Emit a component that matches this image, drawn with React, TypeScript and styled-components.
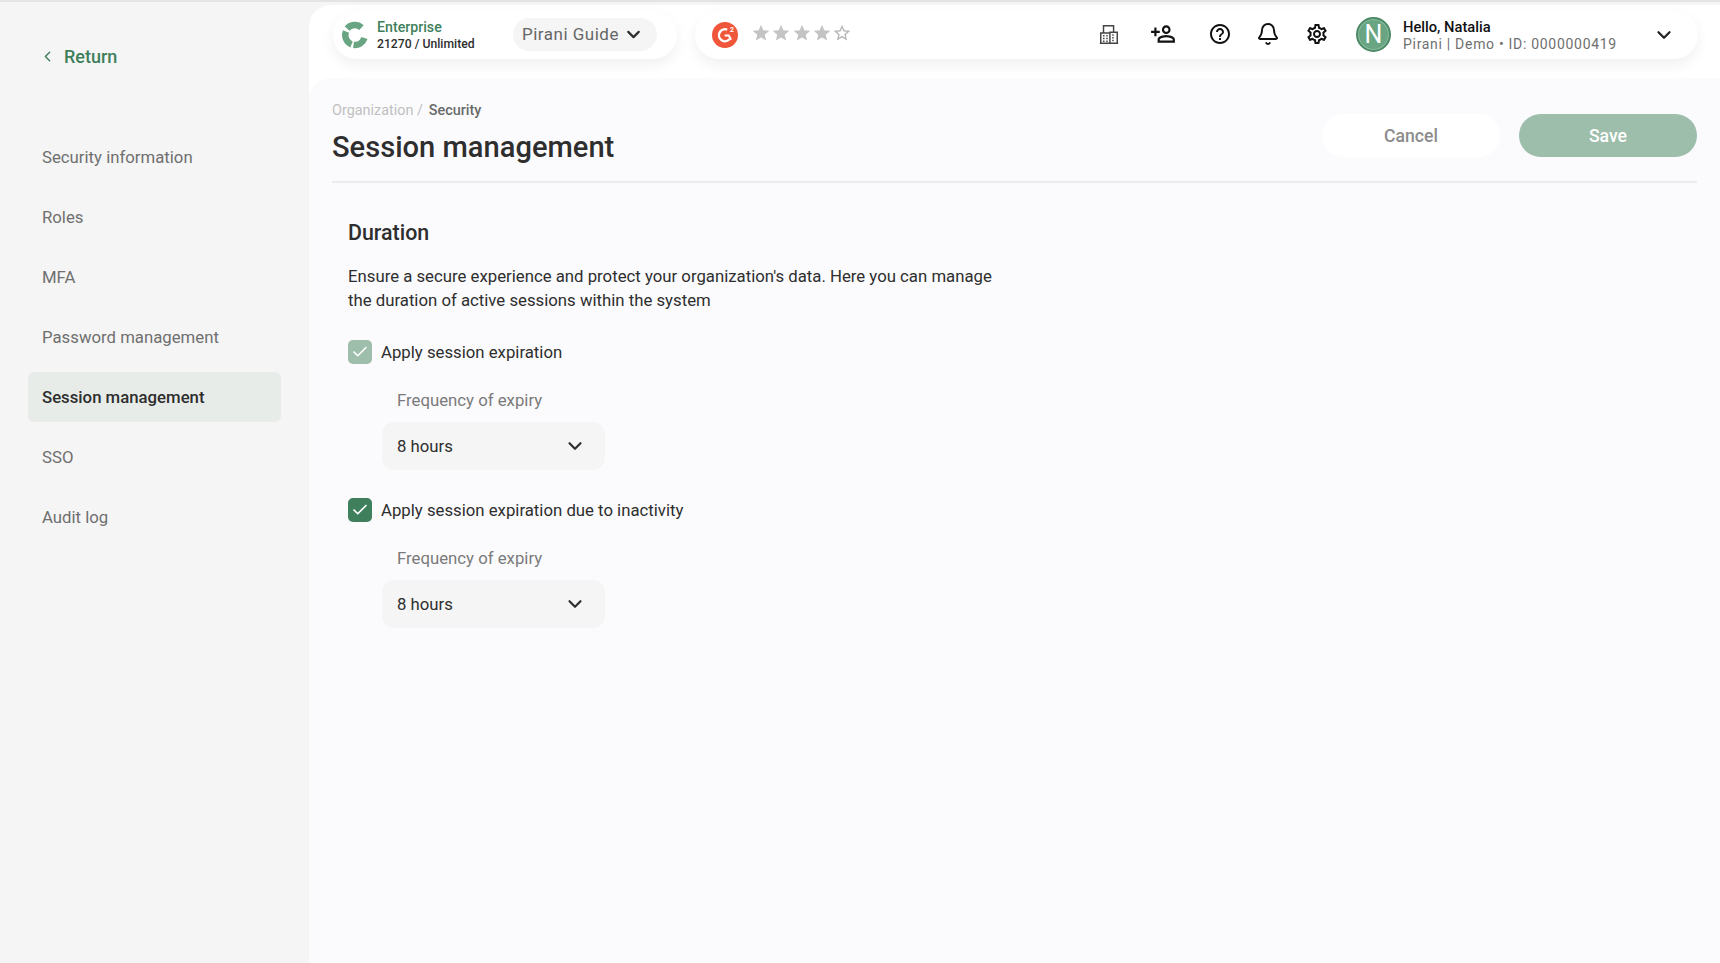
import React from 'react';
import styled, { createGlobalStyle } from 'styled-components';
import { ChevronDown, ChevronLeft, Check, Bell } from 'lucide-react';
import { MdOutlineHelpOutline, MdOutlineSettings, MdOutlinePersonAddAlt, MdStar, MdStarBorder } from 'react-icons/md';

const GlobalStyle = createGlobalStyle`
  html, body {
    margin: 0;
    padding: 0;
    height: 100%;
    background: #f5f5f5;
    font-family: Roboto, 'Liberation Sans', sans-serif;
    color: #2e2e2e;
    overflow: hidden;
  }
  * { box-sizing: border-box; }
`;

const navItems = [
  'Security information',
  'Roles',
  'MFA',
  'Password management',
  'Session management',
  'SSO',
  'Audit log',
];

function Logo() {
  return (
    <svg width="28" height="28" viewBox="0 0 28 28" fill="none" stroke="#69a583" strokeWidth="6.5">
      <path d="M20.5 6.6A10 10 0 0 0 6.2 7.6" />
      <path d="M5 10.5A10 10 0 0 0 10.5 23.4" />
      <path d="M12.5 23.9A10 10 0 0 0 23.4 17" />
    </svg>
  );
}

function G2Badge() {
  return (
    <svg width="26" height="26" viewBox="0 0 26 26">
      <circle cx="13" cy="13" r="13" fill="#f0563a" />
      <path d="M15.2 7.6A6 6 0 1 0 17.6 17" stroke="#fff" strokeWidth="2.4" fill="none" />
      <path d="M12.6 13.6h4.2l2.3 4.1" stroke="#fff" strokeWidth="2" fill="none" />
      <text x="18" y="10" fontSize="7" fontWeight="700" fill="#fff" fontFamily="Roboto, sans-serif">2</text>
    </svg>
  );
}

function BuildingIcon() {
  return (
    <svg width="24" height="24" viewBox="0 0 24 24" fill="none" stroke="#444" strokeWidth="1.6">
      <path d="M3 22V11h10v11M2 22h20M13 22V10h8v12M6 11V3h11v7" />
      <path d="M5.5 14h1.6M9 14h1.6M5.5 17h1.6M9 17h1.6M5.5 20h1.6M9 20h1.6M15.5 13h1.6M15.5 16h1.6M15.5 19h1.6" strokeWidth="1.7" />
    </svg>
  );
}

export default function App() {
  return (
    <>
      <GlobalStyle />
      <Page>
        <Sidebar>
          <ReturnLink>
            <ChevronLeft size={17} strokeWidth={2} />
            Return
          </ReturnLink>
          <NavList>
            {navItems.map((item) => (
              <NavItem key={item} $active={item === 'Session management'}>{item}</NavItem>
            ))}
          </NavList>
        </Sidebar>
        <Main>
          <TopBar>
            <PlanPill>
              <Logo />
              <PlanText>
                <PlanName>Enterprise</PlanName>
                <PlanCount>21270 / Unlimited</PlanCount>
              </PlanText>
              <GuideButton>
                Pirani Guide
                <ChevronDown size={21} strokeWidth={2.5} color="#2e2e2e" />
              </GuideButton>
            </PlanPill>
            <ToolPill>
              <G2Badge />
              <Stars>
                {[0, 1, 2, 3].map((i) => (
                  <MdStar key={i} size={20} color="#c4c4c4" />
                ))}
                <MdStarBorder size={20} color="#b5b5b5" />
              </Stars>
              <Spacer />
              <IconSlot $width={22}><BuildingIcon /></IconSlot>
              <IconSlot $width={26} $left={30}><PersonAdd size={28} color="#111" /></IconSlot>
              <IconSlot $width={24} $left={32}><MdOutlineHelpOutline size={28} color="#111" /></IconSlot>
              <IconSlot $width={24} $left={24}><Bell size={24} color="#111" strokeWidth={1.9} /></IconSlot>
              <IconSlot $width={24} $left={25}><MdOutlineSettings size={28} color="#111" /></IconSlot>
              <Avatar>N</Avatar>
              <UserText>
                <UserName>Hello, Natalia</UserName>
                <UserMeta>Pirani | Demo • ID: 0000000419</UserMeta>
              </UserText>
              <ChevronDown size={22} strokeWidth={2.5} color="#222" />
            </ToolPill>
          </TopBar>
          <Content>
            <Header>
              <div>
                <Breadcrumb>
                  Organization /<BreadcrumbCurrent>Security</BreadcrumbCurrent>
                </Breadcrumb>
                <Title>Session management</Title>
              </div>
              <Actions>
                <CancelButton>Cancel</CancelButton>
                <SaveButton>Save</SaveButton>
              </Actions>
            </Header>
            <Section>
              <SectionTitle>Duration</SectionTitle>
              <Description>
                Ensure a secure experience and protect your organization's data. Here you can manage
                the duration of active sessions within the system
              </Description>
              <CheckRow>
                <CheckBox $muted><Check size={18} strokeWidth={2.2} color="#fff" /></CheckBox>
                Apply session expiration
              </CheckRow>
              <FieldLabel>Frequency of expiry</FieldLabel>
              <Select>
                8 hours
                <ChevronDown size={22} strokeWidth={2.4} color="#2e2e2e" />
              </Select>
              <CheckRow>
                <CheckBox><Check size={18} strokeWidth={2.2} color="#fff" /></CheckBox>
                Apply session expiration due to inactivity
              </CheckRow>
              <FieldLabel>Frequency of expiry</FieldLabel>
              <Select>
                8 hours
                <ChevronDown size={22} strokeWidth={2.4} color="#2e2e2e" />
              </Select>
            </Section>
          </Content>
        </Main>
      </Page>
    </>
  );
}

const Page = styled.div`
  display: flex;
  height: 963px;
  border-top: 2px solid #e4e4e4;
  background: #f5f5f5;
`;

const Sidebar = styled.aside`
  width: 309px;
  flex-shrink: 0;
  padding: 41px 28px 0 28px;
`;

const ReturnLink = styled.div`
  display: flex;
  align-items: center;
  gap: 8px;
  height: 26px;
  padding-left: 11px;
  font-size: 18px;
  font-weight: 500;
  color: #3f7f5c;
`;

const NavList = styled.nav`
  margin-top: 63px;
  display: flex;
  flex-direction: column;
  gap: 10px;
`;

const NavItem = styled.div<{ $active?: boolean }>`
  height: 50px;
  display: flex;
  align-items: center;
  padding-left: 14px;
  border-radius: 6px;
  font-size: 16.75px;
  font-weight: ${(p) => (p.$active ? 500 : 400)};
  color: ${(p) => (p.$active ? '#2e2e2e' : '#6f6f6f')};
  background: ${(p) => (p.$active ? '#e8ece9' : 'transparent')};
`;

const Main = styled.main`
  flex: 1;
  display: flex;
  flex-direction: column;
  background: #fff;
  border-radius: 22px 0 0 0;
  margin-top: 3px;
  min-width: 0;
`;

const TopBar = styled.header`
  height: 73px;
  display: flex;
  gap: 18px;
  padding: 6px 22px 0 24px;
`;

const Pill = styled.div`
  height: 48px;
  display: flex;
  align-items: center;
  background: #fff;
  border-radius: 24px;
  box-shadow: 0 6px 14px rgba(0, 0, 0, 0.06);
`;

const PlanPill = styled(Pill)`
  width: 344px;
  padding: 0 20px 0 8px;
`;

const PlanText = styled.div`
  margin-left: 8px;
  display: flex;
  flex-direction: column;
  flex: 1;
`;

const PlanName = styled.span`
  font-size: 14.2px;
  line-height: 17px;
  font-weight: 500;
  color: #3f7f5c;
`;

const PlanCount = styled.span`
  margin-top: 1px;
  font-size: 12.2px;
  line-height: 15px;
  font-weight: 500;
  color: #2e2e2e;
`;

const GuideButton = styled.div`
  width: 144px;
  height: 33px;
  margin-top: -2px;
  display: flex;
  align-items: center;
  gap: 4px;
  padding-left: 9px;
  border-radius: 17px;
  background: #f5f5f5;
  color: #666;
  font-size: 17px;
  letter-spacing: 0.5px;
`;

const ToolPill = styled(Pill)`
  flex: 1;
  padding: 0 23px 0 17px;
`;

const Stars = styled.div`
  margin-left: 13px;
  margin-top: -5px;
  display: flex;
  gap: 0.3px;
`;

const Spacer = styled.div`
  flex: 1;
`;

const IconSlot = styled.div<{ $width: number; $left?: number }>`
  width: ${(p) => p.$width}px;
  margin-left: ${(p) => p.$left ?? 0}px;
  margin-top: -2px;
  display: flex;
  justify-content: center;
`;

const PersonAdd = styled(MdOutlinePersonAddAlt)`
  transform: scaleX(-1);
`;

const Avatar = styled.div`
  margin-left: 27px;
  margin-top: -2px;
  width: 35px;
  height: 35px;
  border-radius: 50%;
  display: flex;
  align-items: center;
  justify-content: center;
  background: #69a583;
  border: 2px solid #4d8a68;
  box-shadow: inset 0 0 0 1px #8dbda1;
  color: #fff;
  font-size: 25px;
`;

const UserText = styled.div`
  margin-left: 12px;
  width: 250px;
  display: flex;
  flex-direction: column;
`;

const UserName = styled.span`
  font-size: 14.7px;
  line-height: 18px;
  font-weight: 500;
  color: #111;
`;

const UserMeta = styled.span`
  font-size: 14px;
  line-height: 17px;
  color: #6f6f6f;
  letter-spacing: 0.7px;
`;

const Content = styled.section`
  flex: 1;
  background: #fbfbfd;
  border-radius: 22px 0 0 0;
  padding: 20px 23px 0 23px;
`;

const Header = styled.div`
  display: flex;
  align-items: flex-start;
  justify-content: space-between;
  height: 85px;
  border-bottom: 2px solid #ececee;
`;

const Breadcrumb = styled.div`
  margin-top: 4px;
  display: flex;
  font-size: 14.4px;
  line-height: 18px;
  color: #c0c0c0;
`;

const BreadcrumbCurrent = styled.span`
  margin-left: 6px;
  font-weight: 500;
  color: #6a6a6a;
`;

const Title = styled.h1`
  margin: 8px 0 0;
  font-size: 29.1px;
  line-height: 38px;
  font-weight: 500;
  color: #2e2e2e;
`;

const Actions = styled.div`
  margin-top: 16px;
  display: flex;
  gap: 19px;
`;

const ActionButton = styled.button`
  width: 178px;
  height: 43px;
  border: 0;
  border-radius: 22px;
  font-family: inherit;
  font-size: 17.6px;
  font-weight: 500;
`;

const CancelButton = styled(ActionButton)`
  background: #fff;
  color: #8c8c8c;
`;

const SaveButton = styled(ActionButton)`
  background: #9dbeab;
  color: #fff;
`;

const Section = styled.div`
  padding: 36px 0 0 16px;
`;

const SectionTitle = styled.h2`
  margin: 0;
  font-size: 21.4px;
  line-height: 28px;
  font-weight: 500;
  color: #2e2e2e;
`;

const Description = styled.p`
  margin: 18px 0 0;
  width: 660px;
  font-size: 16.75px;
  line-height: 23.5px;
  color: #2e2e2e;
`;

const CheckRow = styled.label`
  margin-top: 28px;
  display: flex;
  align-items: center;
  gap: 9px;
  height: 24px;
  font-size: 16.75px;
  color: #2e2e2e;
`;

const CheckBox = styled.span<{ $muted?: boolean }>`
  width: 24px;
  height: 24px;
  border-radius: 5px;
  display: flex;
  align-items: center;
  justify-content: center;
  background: ${(p) => (p.$muted ? '#9dbeab' : '#3f7f5c')};
`;

const FieldLabel = styled.div`
  margin: 24px 0 0 49px;
  font-size: 16.75px;
  line-height: 24px;
  color: #7a7a7a;
`;

const Select = styled.div`
  margin: 10px 0 0 34px;
  width: 223px;
  height: 48px;
  display: flex;
  align-items: center;
  justify-content: space-between;
  padding: 0 19px 0 15px;
  border-radius: 12px;
  background: #f5f5f5;
  font-size: 16.75px;
  color: #2e2e2e;
`;
